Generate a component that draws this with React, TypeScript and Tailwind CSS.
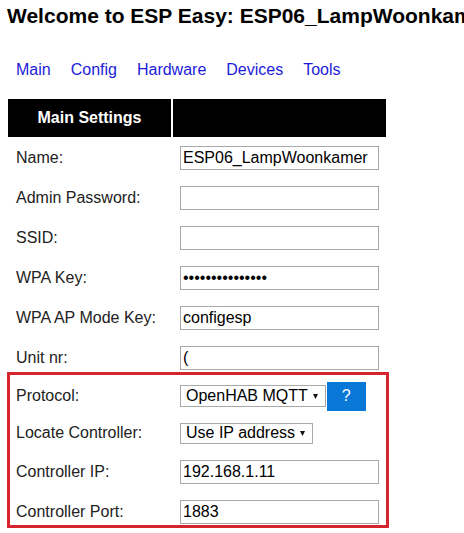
import React from 'react';

const navLinks = ['Main', 'Config', 'Hardware', 'Devices', 'Tools'];

const mainRows = [
  { label: 'Name:', value: 'ESP06_LampWoonkamer' },
  { label: 'Admin Password:', value: '' },
  { label: 'SSID:', value: '' },
  { label: 'WPA Key:', value: '•••••••••••••••' },
  { label: 'WPA AP Mode Key:', value: 'configesp' },
  { label: 'Unit nr:', value: '(' },
];

function TextBox({ value }: { value: string }) {
  return (
    <div className="h-[24px] w-[199px] border border-[#a9a9a9] bg-white pl-[2px] flex items-center text-[16px] leading-none text-black whitespace-nowrap overflow-hidden">
      {value}
    </div>
  );
}

function Caret() {
  return (
    <svg width="5" height="5" viewBox="0 0 5 5" className="ml-[5px]">
      <polygon points="0,0 5,0 2.5,5" fill="#111" />
    </svg>
  );
}

function SelectBox({ value, height }: { value: string; height: string }) {
  return (
    <div className={`${height} inline-flex items-center border border-[#a9a9a9] bg-white pl-[5px] pr-[7px] text-[16px] leading-none text-black whitespace-nowrap`}>
      <span>{value}</span>
      <Caret />
    </div>
  );
}

function Row({ label, height, children }: { label: string; height: string; children: React.ReactNode }) {
  return (
    <div className={`grid grid-cols-[163px_213px] gap-x-[2px] ${height}`}>
      <div className="flex items-center pl-[8px] text-[16px] text-[#222]">{label}</div>
      <div className="flex items-center pl-[7px]">{children}</div>
    </div>
  );
}

export default function App() {
  return (
    <div className="min-h-[533px] w-[464px] overflow-hidden bg-white font-['Liberation_Sans',Arial,sans-serif]">
      <h3 className="pt-[4px] pl-[7px] text-[21px] leading-[24px] font-bold text-black whitespace-nowrap">
        Welcome to ESP Easy: ESP06_LampWoonkamer
      </h3>

      <nav className="mt-[33px] flex gap-[20px] pl-[16px] text-[16px] leading-[18px]">
        {navLinks.map((link) => (
          <a key={link} className="text-[#1c1cd8]">
            {link}
          </a>
        ))}
      </nav>

      <div className="mt-[20px] ml-[8px] flex flex-col gap-y-[2px]">
        <div className="grid grid-cols-[163px_213px] gap-x-[2px] h-[38px]">
          <div className="bg-black flex items-center justify-center text-[16px] font-bold text-white">
            Main Settings
          </div>
          <div className="bg-black" />
        </div>

        {mainRows.map((row) => (
          <Row key={row.label} label={row.label} height="h-[38px]">
            <TextBox value={row.value} />
          </Row>
        ))}

        <div className="relative flex flex-col gap-y-[2px]">
          <Row label="Protocol:" height="h-[34px]">
            <SelectBox value="OpenHAB MQTT" height="h-[22px]" />
            <button className="ml-[1px] h-[29px] w-[39px] bg-[#0a78d6] text-[16px] text-white">?</button>
          </Row>
          <Row label="Locate Controller:" height="h-[36px]">
            <SelectBox value="Use IP address" height="h-[21px]" />
          </Row>
          <Row label="Controller IP:" height="h-[37px]">
            <TextBox value="192.168.1.11" />
          </Row>
          <Row label="Controller Port:" height="h-[39px]">
            <TextBox value="1883" />
          </Row>
          <div className="pointer-events-none absolute top-[-7px] left-[-1px] w-[382px] h-[156px] border-[3px] border-[#d7252f]" />
        </div>
      </div>
    </div>
  );
}
